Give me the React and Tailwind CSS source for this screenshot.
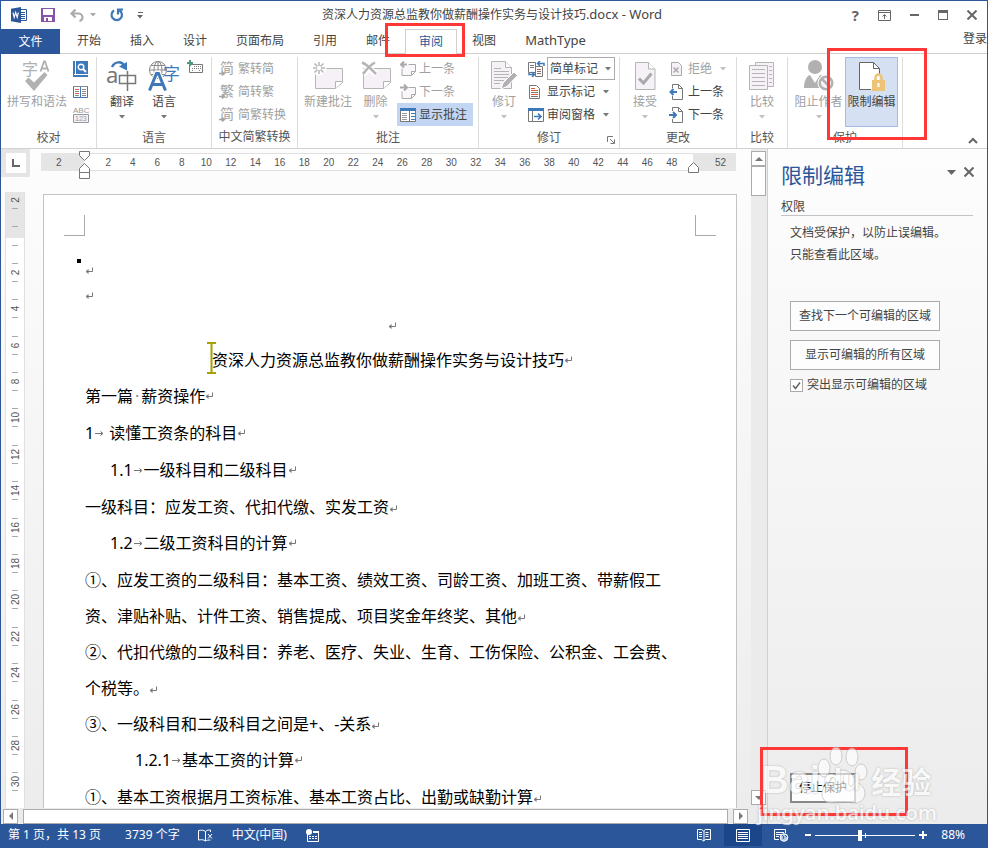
'use client';

import { useState } from 'react';

const TABS = ['开始', '插入', '设计', '页面布局', '引用', '邮件', '审阅', '视图', 'MathType'];

const H_MARKS = Array.from({ length: 24 }, (_, i) => (i + 1) * 2);
const V_MARKS = Array.from({ length: 15 }, (_, i) => (i + 1) * 2);

/* ---------- small shared pieces ---------- */

function Caret({ className = '' }) {
  return (
    <svg width="6" height="4" viewBox="0 0 6 4" className={className} aria-hidden="true">
      <path d="M0 0h6L3 3.5z" fill="currentColor" />
    </svg>
  );
}

function ReturnMark() {
  return (
    <svg width="8" height="8" viewBox="0 0 8 8" className="inline-block shrink-0" fill="none" stroke="#777" aria-hidden="true">
      <path d="M7.5 0.500v4h-6M3.500 2.500l-2.500 2 2.500 2M3 3v3" />
    </svg>
  );
}

function TabArrow() {
  return (
    <svg width="11" height="8" viewBox="0 0 11 8" className="inline-block shrink-0" fill="none" stroke="#777" aria-hidden="true">
      <path d="M1 4.500h8M6.500 2.500l2.500 2-2.500 2M7.500 3v3" />
    </svg>
  );
}

/* ---------- title bar icons ---------- */

function WordLogo() {
  return (
    <svg width="17" height="16" viewBox="0 0 17 16" aria-hidden="true">
      <path d="M8.500 2.500h7v11h-7z" fill="#fff" stroke="#2b579a" />
      <path d="M10 5.500h4M10 7.500h4M10 9.500h4M10 11.500h4" stroke="#2b579a" />
      <path d="M0 1.800L10 0v16L0 14.200z" fill="#2b579a" />
      <path d="M2 5.500l1.200 5 1.500-5 1.500 5 1.200-5" fill="none" stroke="#fff" strokeWidth="1.100" />
    </svg>
  );
}

function SaveIcon() {
  return (
    <svg width="14" height="14" viewBox="0 0 14 14" aria-hidden="true">
      <path d="M0 0h14v14H0z" fill="#8655a8" />
      <path d="M2 1h10v6H2zM3 9h8v4H7v-3H5v3H3z" fill="#fff" />
    </svg>
  );
}

function UndoIcon() {
  return (
    <svg width="15" height="13" viewBox="0 0 15 13" fill="none" stroke="#aaa" strokeWidth="2.200" aria-hidden="true">
      <path d="M5.500 0.500L1.500 4.500l4 4M2 4.500h6.500a4 4 0 0 1 4 4c0 2-1 3-3 3.500" />
    </svg>
  );
}

function RedoIcon() {
  return (
    <svg width="14" height="14" viewBox="0 0 14 14" fill="none" stroke="#3f78b8" strokeWidth="2.200" aria-hidden="true">
      <path d="M4 2.500A5.200 5.200 0 1 0 9.500 2.500M8 6.500V1.500h5" />
    </svg>
  );
}

/* ---------- ribbon icons ---------- */

function SpellIcon() {
  return (
    <svg width="32" height="34" viewBox="0 0 32 34" className="overflow-visible" aria-hidden="true">
      <text x="1" y="16" fontSize="16" fill="#b1b1b1" className="font-sans">字</text>
      <path d="M19.500 12.500l3.500-10h1l3.500 10M20.500 9.500h6" fill="none" stroke="#b1b1b1" strokeWidth="1.800" />
      <path d="M4 22l3.500-3.500 5.500 5L23.500 13l3 3L13 32z" fill="#b1b1b1" />
    </svg>
  );
}

function ResearchIcon() {
  return (
    <svg width="16" height="16" viewBox="0 0 16 16" fill="none" aria-hidden="true">
      <path d="M0 0h15v16H0z" fill="#3f78b8" />
      <path d="M2.500 0v13M1 13.500h14" stroke="#fff" />
      <circle cx="8" cy="6" r="2.800" stroke="#fff" strokeWidth="1.400" />
      <path d="M10 8l3 3" stroke="#fff" strokeWidth="2" />
    </svg>
  );
}

function ThesaurusIcon() {
  return (
    <svg width="16" height="14" viewBox="0 0 16 14" fill="none" aria-hidden="true">
      <path d="M0.500 1.500h7v11h-7zM7.500 1.500h7v11h-7z" fill="#fff" stroke="#3f78b8" />
      <path d="M0 1.500h15" stroke="#888" />
      <path d="M2 4.500h4M2 8.500h4" stroke="#d45b3c" />
      <path d="M2 6.500h4M2 10.500h4M9 4.500h4M9 6.500h4M9 8.500h4M9 10.500h4" stroke="#888" />
    </svg>
  );
}

function WordCountIcon() {
  return (
    <svg width="17" height="17" viewBox="0 0 17 17" fill="none" aria-hidden="true">
      <text x="0" y="7" fontSize="8" fill="#999" fontFamily="Liberation Sans">ABC</text>
      <path d="M0.500 8.500h15v8h-15z" fill="#f4f0f5" stroke="#999" />
      <text x="2" y="15" fontSize="7" fill="#999" fontFamily="Liberation Sans">123</text>
    </svg>
  );
}

function TranslateIcon() {
  return (
    <svg width="32" height="34" viewBox="0 0 32 34" fill="none" aria-hidden="true">
      <text x="0" y="24" fontSize="22" fill="#777" fontFamily="Noto Sans">a</text>
      <path d="M6 8c3-6 10-6 12-1" stroke="#3f78b8" strokeWidth="2.500" />
      <path d="M13 7.500l8 4V3z" fill="#3f78b8" />
      <path d="M13.500 16.500h16v8h-16zM21.500 12v20" stroke="#777" strokeWidth="1.500" />
    </svg>
  );
}

function LanguageIcon() {
  return (
    <svg width="32" height="34" viewBox="0 0 32 34" fill="none" aria-hidden="true">
      <g stroke="#888">
        <circle cx="10" cy="11" r="8.500" />
        <ellipse cx="10" cy="11" rx="4" ry="8.500" />
        <path d="M10 2.500v17M1.500 11h17M3 6.500h14M3 15.500h14" />
      </g>
      <text x="15" y="21" fontSize="17" fill="#3f78b8" className="font-sans">字</text>
      <path d="M1.500 31.500L8.500 14h2l7 17.500M4.500 25.500h10" stroke="#fff" strokeWidth="5" />
      <path d="M1.500 31.500L8.500 14.500h2l7 17M4.500 25.500h10" stroke="#3f78b8" strokeWidth="3" />
    </svg>
  );
}

function KeyboardIcon() {
  return (
    <svg width="17" height="14" viewBox="0 0 17 14" fill="none" aria-hidden="true">
      <path d="M2.500 4.500h13v8h-13z" stroke="#777" fill="#fff" />
      <path d="M7 6.500h7M5 8.500h9M5 10.500h2M12 10.500h2" stroke="#777" strokeDasharray="1 1" />
      <path d="M3 0v6M0 3h6" stroke="#4d9b7c" strokeWidth="2" />
    </svg>
  );
}

function ConvertIcon({ glyph }) {
  return (
    <svg width="17" height="21" viewBox="0 0 17 21" fill="none" className="overflow-visible" aria-hidden="true">
      <text x="1" y="15" fontSize="14" fill="#a5a5a5" className="font-sans">{glyph}</text>
      <path d="M0 15.500h5M3 13.500l2.500 2-2.500 2" stroke="#a5a5a5" strokeWidth="1.500" />
    </svg>
  );
}

function NewCommentIcon() {
  return (
    <svg width="32" height="30" viewBox="0 0 32 30" fill="none" stroke="#b5b5b5" aria-hidden="true">
      <path d="M3.500 7.500h27v14l-7 6h-20z" fill="#f5f1f7" />
      <path d="M30.500 20.500h-7v7" fill="#fff" />
      <circle cx="7" cy="7" r="7.500" fill="#fff" stroke="none" />
      <path d="M7 1v4M7 9v4M1 7h4M9 7h4M2.500 2.500l3 3M8.500 8.500l3 3M11.500 2.500l-3 3M5.500 8.500l-3 3" strokeWidth="1.500" />
    </svg>
  );
}

function DeleteIcon() {
  return (
    <svg width="32" height="30" viewBox="0 0 32 30" fill="none" stroke="#b5b5b5" aria-hidden="true">
      <path d="M3.500 7.500h27v14l-7 6h-20z" fill="#f5f1f7" />
      <path d="M30.500 20.500h-7v7" fill="#fff" />
      <path d="M2 1.500L16 13M15 1.500L3 13" stroke="#fff" strokeWidth="6" />
      <path d="M2 1.500C8 4 11 8 16 13M15 1.500C10 4 7 8 3 13" strokeWidth="2.500" />
    </svg>
  );
}

function CommentStepIcon({ forward }) {
  return (
    <svg width="17" height="16" viewBox="0 0 17 16" fill="none" stroke="#aaa" aria-hidden="true">
      <path d="M8.500 3.500h7v7l-4 4h-9.500v-7M15.500 10.500h-4v4" fill="#faf7fb" />
      {forward ? (
        <path d="M0 3.500h6M4 0.500l3 3-3 3" strokeWidth="2" />
      ) : (
        <path d="M1 3.500h6M4 0.500l-3 3 3 3" strokeWidth="2" />
      )}
    </svg>
  );
}

function ShowCommentsIcon() {
  return (
    <svg width="16" height="14" viewBox="0 0 16 14" fill="none" aria-hidden="true">
      <path d="M0.500 0.500h15v13h-15z" fill="#fff" stroke="#777" />
      <path d="M0 0h16v3H0z" fill="#3f78b8" />
      <path d="M9.500 3v11" stroke="#777" />
      <path d="M2 5.500h5M2 7.500h5M2 9.500h5M2 11.500h5" stroke="#999" />
      <path d="M11 5.500h4M11 8.500h4M11 11.500h4" stroke="#3f78b8" />
    </svg>
  );
}

function TrackIcon() {
  return (
    <svg width="28" height="31" viewBox="0 0 28 31" fill="none" stroke="#b5b5b5" aria-hidden="true">
      <path d="M1.500 1.500h14l6 6v21h-20z" fill="#f5f1f7" />
      <path d="M15.500 1.500v6h6" fill="#fff" />
      <path d="M4 8.500h7M4 11.500h15M4 14.500h15M4 17.500h15M4 20.500h10M4 23.500h6" />
      <path d="M11 29l2-6L24 12l3.500 3.500L17 26.500z" fill="#b1b1b1" stroke="#fff" />
    </svg>
  );
}

function MarkupIcon() {
  return (
    <svg width="17" height="16" viewBox="0 0 17 16" fill="none" aria-hidden="true">
      <path d="M0.500 1.500h7v10h-7zM7.500 5.500h7v10h-7z" fill="#fff" stroke="#777" />
      <path d="M2 4.500h4M2 6.500h4M9 10.500h4M9 12.500h4" stroke="#777" />
      <path d="M9 8.500h4" stroke="#d45b3c" />
      <path d="M16 5V2.500h-6M12 0l-2.500 2.500L12 5M1 12v1.500h5M4 11l2.500 2.500L4 16" stroke="#3f78b8" strokeWidth="1.500" />
    </svg>
  );
}

function ShowMarkupIcon() {
  return (
    <svg width="13" height="14" viewBox="-1 0 13 14" fill="none" aria-hidden="true">
      <path d="M0.500 0.500h7l3 3v10h-10z" fill="#fff" stroke="#777" />
      <path d="M2 3.500h4M2 5.500h7M2 9.500h7" stroke="#d45b3c" />
      <path d="M2 7.500h7M2 11.500h7" stroke="#777" />
    </svg>
  );
}

function ReviewPaneIcon() {
  return (
    <svg width="16" height="14" viewBox="0 0 16 14" fill="none" aria-hidden="true">
      <path d="M0.500 0.500h15v13h-15z" fill="#fff" stroke="#777" />
      <path d="M0 0h16v3H0z" fill="#3f78b8" />
      <path d="M4.500 3v11" stroke="#777" />
      <path d="M6 8.500h7M10 5.500l3 3-3 3" stroke="#3f78b8" strokeWidth="1.600" />
    </svg>
  );
}

function AcceptIcon() {
  return (
    <svg width="23" height="30" viewBox="0 0 23 30" fill="none" stroke="#b5b5b5" aria-hidden="true">
      <path d="M1.500 1.500h13l6.500 6.500v20.500h-19.500z" fill="#f5f1f7" />
      <path d="M14.500 1.500v6.500h6.500" fill="#fff" />
      <path d="M5 17.500l4.500 4.500 8-9.500" stroke="#aaa" strokeWidth="3" />
    </svg>
  );
}

function RejectIcon() {
  return (
    <svg width="14" height="14" viewBox="-2 0 14 14" fill="none" stroke="#aaa" aria-hidden="true">
      <path d="M0.500 0.500h7l3 3v10h-10z" fill="#f5f1f7" />
      <path d="M2.500 5.500l5 5M7.500 5.500l-5 5" strokeWidth="1.500" />
    </svg>
  );
}

function ChangeStepIcon({ forward }) {
  return (
    <svg width="14" height="16" viewBox="0 0 14 16" fill="none" aria-hidden="true">
      <path d="M3.500 4V0.500h6l4 4v11h-10V12M9.500 0.500v4h4" stroke="#777" />
      {forward ? (
        <path d="M0 8h7M4 5l3 3-3 3" stroke="#3f78b8" strokeWidth="2" />
      ) : (
        <path d="M1 8h7M4.500 5L1.500 8l3 3" stroke="#3f78b8" strokeWidth="2" />
      )}
    </svg>
  );
}

function CompareIcon() {
  return (
    <svg width="26" height="30" viewBox="0 0 26 30" fill="none" stroke="#b5b5b5" aria-hidden="true">
      <path d="M6.500 1.500h18v24h-18z" fill="#f5f1f7" />
      <path d="M0.500 4.500h18v24h-18z" fill="#f5f1f7" />
      <path d="M3 8.500h13M3 12.500h13M3 16.500h13M3 20.500h13M3 24.500h13M20 5.500h3M20 9.500h3M20 13.500h3M20 17.500h3M20 21.500h3" />
    </svg>
  );
}

function BlockAuthorsIcon() {
  return (
    <svg width="30" height="32" viewBox="0 0 30 32" fill="#b1b1b1" aria-hidden="true">
      <circle cx="11" cy="7" r="7" />
      <path d="M0 28c0-8 3-12 6-13l5 8 5-8c3 0 6 3 6 13z" />
      <circle cx="22" cy="23" r="8.500" fill="#fff" />
      <circle cx="22" cy="23" r="6.300" fill="#f5f1f7" stroke="#b1b1b1" strokeWidth="2.500" />
      <path d="M17.500 18.500l9 9" stroke="#b1b1b1" strokeWidth="2.500" />
    </svg>
  );
}

function RestrictIcon() {
  return (
    <svg width="28" height="32" viewBox="0 0 28 32" fill="none" aria-hidden="true">
      <path d="M1.500 2.500h14l6 6v21h-20z" fill="#fff" />
      <path d="M13 29.500H1.500v-27h14l6 6V14M15.500 2.500v6h6" stroke="#666" />
      <path d="M17.500 20v-2.500a3 3 0 0 1 6 0V20" stroke="#edc477" strokeWidth="2.500" />
      <path d="M14 20h13v11H14z" fill="#edc477" />
      <path d="M20.500 23v4" stroke="#fff" strokeWidth="2" />
    </svg>
  );
}

/* ---------- ribbon building blocks ---------- */

function Group({ label, width, children, launcher }) {
  return (
    <div className={`flex shrink-0 flex-col border-r border-[#dcdcdc] ${width}`}>
      <div className="flex h-[70px]">{children}</div>
      <div className="relative flex h-[22px] items-center justify-center text-[#555]">
        {label}
        {launcher && (
          <button aria-label="修订选项" className="absolute right-1 bottom-1 text-[#777]">
            <svg width="8" height="8" viewBox="0 0 8 8" fill="none" stroke="currentColor">
              <path d="M0.500 6V0.500H6M3 3l4 4M7.500 3.500v4h-4" />
            </svg>
          </button>
        )}
      </div>
    </div>
  );
}

function BigButton({ icon, label, disabled, caret, active, className = '' }) {
  return (
    <button
      disabled={disabled}
      className={`flex h-[70px] shrink-0 flex-col items-center whitespace-nowrap ${
        active ? 'border border-[#a3bde3] bg-[#d5e1f2]' : 'border border-transparent'
      } ${disabled ? 'text-[#a0a0a0]' : 'text-[#444]'} ${className}`}
    >
      <span className="flex h-[35px] items-center justify-center">{icon}</span>
      <span className="leading-[18px]">{label}</span>
      {caret && <Caret className={disabled ? 'mt-1 text-[#c0c0c0]' : 'mt-1 text-[#777]'} />}
    </button>
  );
}

function SmallButton({ icon, label, disabled, caret, active }) {
  return (
    <button
      disabled={disabled}
      className={`flex h-[23px] items-center whitespace-nowrap pr-[6px] pl-[3px] ${active ? 'bg-[#c2d5f2]' : ''} ${
        disabled ? 'text-[#a0a0a0]' : 'text-[#444]'
      }`}
    >
      <span className="flex w-[19px] shrink-0 items-center">{icon}</span>
      {label}
      {caret && <Caret className={disabled ? 'ml-2 text-[#c0c0c0]' : 'ml-2 text-[#777]'} />}
    </button>
  );
}

function Ribbon() {
  return (
    <div className="flex h-[95px] shrink-0 border-b border-[#d0d0d0] bg-white pt-[3px]">
      <Group label="校对" width="w-[96px]">
        <BigButton className="ml-1 w-16" disabled icon={<SpellIcon />} label="拼写和语法" />
        <div className="ml-1 flex flex-col">
          <button aria-label="信息检索" className="flex h-[23px] items-center"><ResearchIcon /></button>
          <button aria-label="同义词库" className="flex h-[23px] items-center"><ThesaurusIcon /></button>
          <button aria-label="字数统计" className="flex h-[23px] items-center"><WordCountIcon /></button>
        </div>
      </Group>
      <Group label="语言" width="w-[115px]">
        <BigButton className="ml-1 w-[42px]" caret icon={<TranslateIcon />} label="翻译" />
        <BigButton className="w-[42px]" caret icon={<LanguageIcon />} label="语言" />
        <button aria-label="更新输入法词典" className="ml-[2px] flex h-5 items-center"><KeyboardIcon /></button>
      </Group>
      <Group label="中文简繁转换" width="w-[86px]">
        <div className="ml-1 flex flex-col">
          <SmallButton disabled icon={<ConvertIcon glyph="简" />} label="繁转简" />
          <SmallButton disabled icon={<ConvertIcon glyph="繁" />} label="简转繁" />
          <SmallButton disabled icon={<ConvertIcon glyph="简" />} label="简繁转换" />
        </div>
      </Group>
      <Group label="批注" width="w-[181px]">
        <BigButton className="ml-1 w-[52px]" disabled icon={<NewCommentIcon />} label="新建批注" />
        <BigButton className="w-[43px]" disabled caret icon={<DeleteIcon />} label="删除" />
        <div className="flex flex-col">
          <SmallButton disabled icon={<CommentStepIcon />} label="上一条" />
          <SmallButton disabled icon={<CommentStepIcon forward />} label="下一条" />
          <SmallButton active icon={<ShowCommentsIcon />} label="显示批注" />
        </div>
      </Group>
      <Group label="修订" width="w-[141px]" launcher>
        <BigButton className="ml-1 w-[42px]" disabled caret icon={<TrackIcon />} label="修订" />
        <div className="flex flex-col">
          <label className="flex h-[23px] items-center pl-[3px]">
            <span className="flex w-[19px] items-center"><MarkupIcon /></span>
            <span className="relative flex items-center">
              <select
                aria-label="显示以供审阅"
                className="h-[23px] w-[68px] appearance-none border border-[#ababab] bg-white pl-[2px] text-[#444]"
              >
                <option>简单标记</option>
                <option>所有标记</option>
                <option>无标记</option>
              </select>
              <Caret className="pointer-events-none absolute right-1 text-[#777]" />
            </span>
          </label>
          <SmallButton caret icon={<ShowMarkupIcon />} label="显示标记" />
          <SmallButton caret icon={<ReviewPaneIcon />} label="审阅窗格" />
        </div>
      </Group>
      <Group label="更改" width="w-[117px]">
        <BigButton className="ml-1 w-[42px]" disabled caret icon={<AcceptIcon />} label="接受" />
        <div className="flex flex-col">
          <SmallButton disabled caret icon={<RejectIcon />} label="拒绝" />
          <SmallButton icon={<ChangeStepIcon />} label="上一条" />
          <SmallButton icon={<ChangeStepIcon forward />} label="下一条" />
        </div>
      </Group>
      <Group label="比较" width="w-[51px]">
        <BigButton className="w-[50px]" disabled caret icon={<CompareIcon />} label="比较" />
      </Group>
      <Group label="保护" width="w-[115px]">
        <BigButton className="ml-1 w-[53px]" disabled caret icon={<BlockAuthorsIcon />} label="阻止作者" />
        <BigButton className="w-[53px]" active icon={<RestrictIcon />} label="限制编辑" />
      </Group>
      <div className="flex flex-1 items-end justify-end pr-[9px] pb-1">
        <button aria-label="折叠功能区">
          <svg width="10" height="7" viewBox="0 0 10 7" fill="none" stroke="#666" strokeWidth="2">
            <path d="M1 6l4-4 4 4" />
          </svg>
        </button>
      </div>
    </div>
  );
}

function TitleBar() {
  return (
    <header className="flex h-7 shrink-0 items-center bg-white text-[#444]">
      <div className="flex w-[148px] items-center pl-[10px]">
        <WordLogo />
        <button aria-label="保存" className="ml-[13px]"><SaveIcon /></button>
        <button aria-label="撤消" className="ml-[15px] flex items-center gap-[5px] text-[#aaa]">
          <UndoIcon />
          <Caret />
        </button>
        <button aria-label="重复" className="ml-[14px]"><RedoIcon /></button>
        <button aria-label="自定义快速访问工具栏" className="ml-[13px] flex flex-col items-center gap-[2px] text-[#666]">
          <span className="h-px w-[5px] bg-[#666]" />
          <Caret />
        </button>
      </div>
      <h1 className="flex-1 text-center text-[12px]">
        资深人力资源总监教你做薪酬操作实务与设计技巧<span className="text-[13px]">.docx - Word</span>
      </h1>
      <div className="flex w-[152px] items-center justify-end gap-[19px] pr-[10px] text-[#666]">
        <button aria-label="帮助" className="text-[15px] leading-4 font-bold">?</button>
        <button aria-label="功能区显示选项">
          <svg width="13" height="11" viewBox="0 0 13 11" fill="none" stroke="currentColor">
            <path d="M0.500 0.500h12v10h-12zM0 2.500h13M6.500 9V5M4.500 6.500l2-2 2 2" />
          </svg>
        </button>
        <button aria-label="最小化" className="h-[2px] w-[9px] bg-[#666]" />
        <button aria-label="最大化" className="h-[10px] w-[10px] border border-t-3 border-[#666]" />
        <button aria-label="关闭">
          <svg width="10" height="10" viewBox="0 0 10 10" stroke="currentColor" strokeWidth="2">
            <path d="M0.500 0.500l9 9M9.500 0.500l-9 9" />
          </svg>
        </button>
      </div>
    </header>
  );
}

function TabBar() {
  return (
    <nav className="flex h-[25px] shrink-0 items-stretch bg-white text-[#444]">
      <button className="w-[59px] shrink-0 bg-[#2b579a] text-white">文件</button>
      <div className="flex flex-1 gap-px border-b border-[#d0d0d0] pl-[3px]">
        {TABS.map((tab) => (
          <button
            key={tab}
            className={
              tab === '审阅'
                ? '-mb-px border border-b-0 border-[#d0d0d0] bg-white px-[13px] text-[#2b579a]'
                : 'px-[14px]'
            }
          >
            {tab === 'MathType' ? <span className="text-[13px]">{tab}</span> : tab}
          </button>
        ))}
      </div>
      <button className="border-b border-[#d0d0d0] pb-1">登录</button>
    </nav>
  );
}

/* ---------- rulers ---------- */

function HorizontalRuler() {
  return (
    <div className="relative flex h-[18px] flex-1 font-['Liberation_Sans',sans-serif] text-[10px] leading-5 text-[#555]">
      <div className="w-[43px] bg-[#e5e5e5] pl-[15px]">2</div>
      <div className="flex flex-1 border-y border-[#e0e0e0] bg-white pr-[9px] pl-3 leading-[18px]">
        {H_MARKS.map((n) => (
          <span key={n} className="min-w-0 flex-1 text-center">{n}</span>
        ))}
      </div>
      <div className="w-[43px] bg-[#e5e5e5] pl-[22px]">52</div>
      <svg width="11" height="29" viewBox="0 0 11 29" className="absolute -top-[2px] left-[38px]" fill="#fff" stroke="#777">
        <path d="M0.500 0.500h10v4l-5 5-5-5zM0.500 21.500v-4l5-5 5 5v4zM0.500 21.500h10v6h-10z" />
      </svg>
      <svg width="11" height="11" viewBox="0 0 11 11" className="absolute top-[9px] right-[37px]" fill="#fff" stroke="#777">
        <path d="M0.500 10.500v-5l5-5 5 5v5z" />
      </svg>
    </div>
  );
}

function VerticalRuler() {
  return (
    <div className="ml-1 flex w-5 shrink-0 flex-col border-x border-[#e0e0e0] bg-white font-['Liberation_Sans',sans-serif] text-[10px] text-[#555]">
      <div className="flex h-[46px] shrink-0 flex-col items-center bg-[#e5e5e5]">
        <span className="h-4 -rotate-90 leading-[18px]">2</span>
        <i className="h-px w-[6px] bg-[#aaa]" />
        <i className="mt-[17px] h-px w-[6px] bg-[#aaa]" />
      </div>
      <div className="flex min-h-0 flex-1 flex-col items-center pt-[7px] pb-2">
        <i className="mb-2 h-px w-[6px] shrink-0 bg-[#aaa]" />
        {V_MARKS.map((n) => (
          <div key={n} className="flex min-h-0 flex-1 flex-col items-center justify-center">
            <i className="h-px w-[6px] shrink-0 bg-[#aaa]" />
            <span className="h-[17px] -rotate-90 leading-[19px]">{n}</span>
            <i className="h-px w-[6px] shrink-0 bg-[#aaa]" />
          </div>
        ))}
      </div>
    </div>
  );
}

/* ---------- document ---------- */

function Heading({ number, indent = '', children }) {
  return (
    <h3 className={`mb-px flex items-center whitespace-nowrap ${indent}`}>
      {number && (
        <>
          <span>{number}</span>
          <TabArrow />
        </>
      )}
      {children}
      <ReturnMark />
    </h3>
  );
}

function Page() {
  return (
    <article className="min-w-0 flex-1 overflow-hidden border border-b-0 border-[#c3c3c3] bg-white px-5 pt-5 text-[16px] leading-9 text-black">
      <div className="flex justify-between">
        <i className="h-[21px] w-[21px] border-r border-b border-[#aaa]" />
        <i className="h-[21px] w-[21px] border-b border-l border-[#aaa]" />
      </div>
      <div className="px-[21px]">
        <div className="-ml-2 mt-[23px] h-1 w-1 bg-black" />
        <div className="mt-1 flex h-[25px] items-start"><ReturnMark /></div>
        <div className="flex h-[25px] items-start"><ReturnMark /></div>
        <div className="mt-[5px] flex h-5 items-start justify-center pl-1"><ReturnMark /></div>
        <h2 className="flex items-center justify-center pl-1 whitespace-nowrap">
          <span className="relative">
            <svg width="9" height="32" viewBox="0 0 9 32" className="absolute top-0 -left-[5px]" stroke="#a8a000" strokeWidth="2" aria-hidden="true">
              <path d="M0 1h9M0 31h9M4.500 1v30" />
            </svg>
            资深人力资源总监教你做薪酬操作实务与设计技巧
          </span>
          <ReturnMark />
        </h2>
        <Heading>
          第一篇<span className="px-[2px] text-[#888]">·</span>薪资操作
        </Heading>
        <Heading number="1"><span className="ml-1">读懂工资条的科目</span></Heading>
        <Heading number="1.1" indent="pl-[25px]">一级科目和二级科目</Heading>
        <p className="whitespace-nowrap">一级科目：应发工资、代扣代缴、实发工资<ReturnMark /></p>
        <Heading number="1.2" indent="pl-[25px]">二级工资科目的计算</Heading>
        <p className="whitespace-nowrap">
          ①、应发工资的二级科目：基本工资、绩效工资、司龄工资、加班工资、带薪假工
          <br />
          资、津贴补贴、计件工资、销售提成、项目奖金年终奖、其他<ReturnMark />
        </p>
        <p className="whitespace-nowrap">
          ②、代扣代缴的二级科目：养老、医疗、失业、生育、工伤保险、公积金、工会费、
          <br />
          个税等。<ReturnMark />
        </p>
        <p className="whitespace-nowrap">③、一级科目和二级科目之间是+、-关系<ReturnMark /></p>
        <Heading number="1.2.1" indent="pl-[50px]">基本工资的计算</Heading>
        <p className="whitespace-nowrap">①、基本工资根据月工资标准、基本工资占比、出勤或缺勤计算<ReturnMark /></p>
      </div>
    </article>
  );
}

function ScrollButton({ label, path, className = '' }) {
  return (
    <button
      aria-label={label}
      className={`flex h-[15px] w-[15px] shrink-0 items-center justify-center border border-[#ababab] bg-white ${className}`}
    >
      <svg width="8" height="8" viewBox="0 0 8 8" fill="#777"><path d={path} /></svg>
    </button>
  );
}

function Workspace() {
  return (
    <section className="flex min-w-0 flex-1 flex-col bg-linear-to-b from-[#fdfdfd] to-[#ececec]">
      <div className="flex min-h-0 flex-1">
        <div className="flex min-w-0 flex-1 flex-col">
          <div className="flex h-[43px] shrink-0 items-start pr-[15px]">
            <button aria-label="制表符" className="flex h-7 w-[29px] shrink-0 items-center justify-center bg-[#e5e5e5]">
              <span className="flex h-5 w-5 items-center justify-center bg-white">
                <i className="h-2 w-2 border-b-2 border-l-2 border-[#666]" />
              </span>
            </button>
            <div className="ml-[11px] flex flex-1 pt-1"><HorizontalRuler /></div>
          </div>
          <div className="flex min-h-0 flex-1">
            <VerticalRuler />
            <div className="ml-[18px] flex min-w-0 flex-1 pt-[2px] pr-[14px]"><Page /></div>
          </div>
        </div>
        <div className="flex w-4 shrink-0 flex-col bg-[#ebebeb] pt-[2px]">
          <ScrollButton label="向上滚动" path="M0 6h8L4 2z" />
          <div className="h-[30px] w-[15px] border border-[#ababab] bg-white" />
          <div className="flex-1" />
          <ScrollButton label="向下滚动" path="M0 2h8L4 6z" className="mb-[3px]" />
        </div>
      </div>
      <div className="flex h-4 shrink-0 items-center gap-[5px] bg-[#ebebeb] pr-[19px] pl-[2px]">
        <ScrollButton label="向左滚动" path="M6 0v8L2 4z" />
        <div className="h-[15px] flex-1 border border-[#ababab] bg-white" />
        <ScrollButton label="向右滚动" path="M2 0v8l4-4z" />
      </div>
    </section>
  );
}

/* ---------- restrict editing pane ---------- */

function RestrictPane() {
  const [highlight, setHighlight] = useState(true);

  return (
    <aside className="flex w-[220px] shrink-0 flex-col border-l border-[#d0d0d0] bg-linear-to-b from-[#fdfdfd] to-[#ececec] pr-[14px] pl-[13px] text-[#444]">
      <div className="mt-2 flex h-10 items-start justify-between">
        <h2 className="pt-[2px] text-[21px] leading-8 text-[#2b579a]">限制编辑</h2>
        <div className="-mr-px flex items-center gap-2 pt-[10px] text-[#666]">
          <button aria-label="任务窗格选项">
            <svg width="9" height="5" viewBox="0 0 9 5" fill="currentColor"><path d="M0 0h9L4.500 5z" /></svg>
          </button>
          <button aria-label="关闭窗格">
            <svg width="10" height="10" viewBox="0 0 10 10" stroke="currentColor" strokeWidth="2">
              <path d="M0.500 0.500l9 9M9.500 0.500l-9 9" />
            </svg>
          </button>
        </div>
      </div>
      <h3 className="border-b border-[#c3c3c3] pt-[2px] leading-4">权限</h3>
      <div className="flex flex-1 flex-col items-start pl-[9px]">
        <p className="mt-[6px] leading-[22px] whitespace-nowrap">
          文档受保护，以防止误编辑。
          <br />
          只能查看此区域。
        </p>
        <button className="mt-[35px] h-[30px] w-[150px] border border-[#ababab] bg-[#fdfdfd]">查找下一个可编辑的区域</button>
        <button className="mt-[9px] h-[30px] w-[150px] border border-[#ababab] bg-[#fdfdfd]">显示可编辑的所有区域</button>
        <label className="mt-[6px] flex items-center gap-1 whitespace-nowrap">
          <span className="relative flex">
            <input
              type="checkbox"
              checked={highlight}
              onChange={(e) => setHighlight(e.target.checked)}
              className="h-[13px] w-[13px] appearance-none border border-[#ababab] bg-white"
            />
            {highlight && (
              <svg width="9" height="9" viewBox="0 0 9 9" fill="none" stroke="#666" strokeWidth="1.500" className="pointer-events-none absolute top-[2px] left-[2px]">
                <path d="M1 4.500l2.500 3L8 1.500" />
              </svg>
            )}
          </span>
          突出显示可编辑的区域
        </label>
        <button className="mt-auto mb-[21px] h-[30px] w-[66px] border-2 border-[#888] bg-[#fdfdfd] text-black">停止保护</button>
      </div>
    </aside>
  );
}

/* ---------- status bar ---------- */

function StatusBar() {
  const [zoom, setZoom] = useState(88);

  return (
    <footer className="flex h-6 shrink-0 items-stretch bg-[#2b579a] pb-[2px] pl-[7px] text-white">
      <div className="flex items-center whitespace-nowrap">
        <button>第 1 页，共 13 页</button>
        <button className="ml-6">3739 个字</button>
        <button aria-label="校对错误" className="ml-[18px]">
          <svg width="16" height="13" viewBox="0 0 16 13" fill="none" stroke="#fff">
            <path d="M7.500 2.500c-2-1.500-4-1.500-7-1v9.500c3-.5 5-.5 7 1v-9.500c1-1 2-1.500 4-1.500h1v2M7.500 12c1-.8 3-1 5-1M10 5l4 4.500M14 5l-4 4.500" />
          </svg>
        </button>
        <button className="ml-[18px]">中文(中国)</button>
        <button aria-label="宏录制" className="ml-[19px]">
          <svg width="13" height="13" viewBox="0 0 13 13" fill="none">
            <path d="M1.500 5v7.500h11v-10H7" stroke="#fff" />
            <path d="M7 2h6v2H7z" fill="#fff" />
            <circle cx="3" cy="3" r="3" fill="#fff" />
            <path d="M3 7.500h8M3 9.500h8" stroke="#fff" strokeDasharray="2 1" />
          </svg>
        </button>
      </div>
      <div className="ml-auto flex items-center">
        <button aria-label="阅读视图" className="mr-[13px]">
          <svg width="14" height="13" viewBox="0 0 14 13" fill="none" stroke="#fff">
            <path d="M6.500 2L4.500 0.500h-4v10h4l2 1.500 2-1.500h5v-10h-5zM7 2v10M2 3.500h3M2 5.500h3M2 7.500h3M8.500 3.500h3M8.500 5.500h3M8.500 7.500h3" />
          </svg>
        </button>
        <button aria-label="页面视图" className="flex w-[38px] items-center justify-center self-stretch bg-[#1b468a]">
          <svg width="14" height="13" viewBox="0 0 14 13" fill="none" stroke="#fff">
            <path d="M0.500 0.500h13v12h-13zM2 3.500h10M2 5.500h10M2 7.500h10M2 9.500h10" />
          </svg>
        </button>
        <button aria-label="Web 版式视图" className="ml-3">
          <svg width="15" height="13" viewBox="0 0 15 13" fill="none" stroke="#fff">
            <path d="M11.500 4V0.500H0.500v10H5M2 3.500h8M2 5.500h5M2 7.500h3" />
            <circle cx="10" cy="8.500" r="3.800" fill="#b8cbe6" />
            <path d="M8 6l2 2-1 2M11 6l2 2" stroke="#2b579a" />
          </svg>
        </button>
        <button aria-label="缩小" className="ml-4 h-[2px] w-[6px] bg-white" />
        <span className="relative ml-[4px] flex w-[100px] items-center">
          <input
            type="range"
            aria-label="显示比例"
            min="0"
            max="200"
            value={zoom}
            onChange={(e) => setZoom(Number(e.target.value))}
            className="h-[11px] w-full appearance-none bg-transparent [&::-webkit-slider-runnable-track]:h-px [&::-webkit-slider-runnable-track]:bg-white [&::-webkit-slider-thumb]:-mt-[5px] [&::-webkit-slider-thumb]:h-[11px] [&::-webkit-slider-thumb]:w-1 [&::-webkit-slider-thumb]:appearance-none [&::-webkit-slider-thumb]:bg-white"
          />
          <i className="pointer-events-none absolute left-1/2 h-[5px] w-px bg-white" />
        </span>
        <button aria-label="放大" className="ml-[4px]">
          <svg width="8" height="8" viewBox="0 0 8 8" stroke="#fff" strokeWidth="2"><path d="M4 0v8M0 4h8" /></svg>
        </button>
        <button className="mr-[22px] ml-[14px]">{zoom}%</button>
      </div>
    </footer>
  );
}

/* ---------- overlays ---------- */

function Watermark() {
  return (
    <div className="pointer-events-none absolute right-[50px] bottom-[23px] flex flex-col text-white opacity-65 [text-shadow:0_0_2px_#888]">
      <svg width="54" height="60" viewBox="0 0 54 60" className="absolute -top-[13px] left-[58px]" fill="#fff" stroke="#bbb" aria-hidden="true">
        <ellipse cx="21" cy="10" rx="6" ry="9" />
        <ellipse cx="37" cy="11" rx="6" ry="9" />
        <ellipse cx="9" cy="22" rx="6" ry="9" />
        <ellipse cx="46" cy="26" rx="6" ry="8" />
        <path d="M28 24c-8 0-10 9-16 14-9 7-5 20 5 19 7-1 15-1 22 0 11 1 15-12 6-19-6-5-9-14-17-14z" />
      </svg>
      <div className="flex items-center font-['Liberation_Sans',sans-serif] text-[38px] leading-[42px] font-bold">
        <span className="ml-1 w-[56px]">Bai</span>
        <span className="relative w-[50px] text-center text-[30px]">du</span>
        <span className="ml-1 font-['Noto_Sans_CJK_SC',sans-serif] text-[30px]">经验</span>
      </div>
      <div className="text-[20px] leading-6 font-semibold">jingyan.baidu.com</div>
    </div>
  );
}

export default function App() {
  return (
    <div
      lang="zh-CN"
      className="relative flex h-screen flex-col overflow-hidden border border-b-0 border-[#2b579a] bg-white font-['Noto_Sans','Noto_Sans_CJK_SC',sans-serif] text-[12px]"
    >
      <TitleBar />
      <TabBar />
      <Ribbon />
      <main className="flex min-h-0 flex-1">
        <Workspace />
        <RestrictPane />
      </main>
      <StatusBar />

      {/* callout frames */}
      <div className="pointer-events-none absolute top-[22px] left-[384px] h-[34px] w-20 border-3 border-[#ff3737]" />
      <div className="pointer-events-none absolute top-[47px] left-[826px] h-[92px] w-[100px] border-3 border-[#ff3737]" />
      <div className="pointer-events-none absolute right-[79px] bottom-[32px] h-[69px] w-[148px] border-3 border-[#ff3737]" />
      <Watermark />
    </div>
  );
}
